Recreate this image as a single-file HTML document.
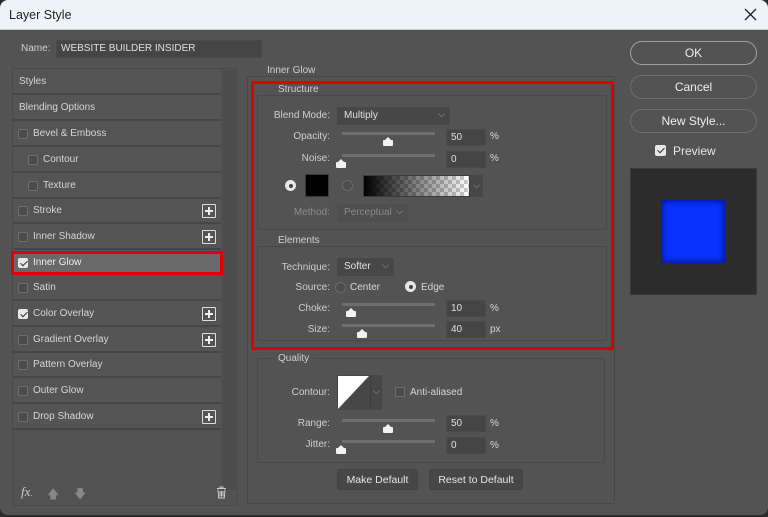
<!DOCTYPE html>
<html><head><meta charset="utf-8"><style>
*{box-sizing:border-box;margin:0;padding:0}
body{width:768px;height:517px;background:#2b2b2b;font-family:"Liberation Sans",sans-serif;font-size:10px;color:#d6d6d6;position:relative;overflow:hidden}
.a{position:absolute}
#win{left:0;top:0;width:768px;height:515px;background:#535353;border-radius:8px;overflow:hidden}
#title{left:0;top:0;width:768px;height:30px;background:#eef3f8;color:#222;font-size:12.5px;padding:8px 0 0 9px;border-bottom:1px solid #ccc}
.lbl{color:#cfcfcf;text-align:right}
.inp{background:#454545;border:1px solid #4a4a4a;color:#e0e0e0;padding:2px 4px}
.item{position:absolute;left:13px;width:208px;height:25px;border-bottom:2px solid #464646;background:#545454}
.item span{position:absolute;top:6px}
.cb{position:absolute;width:10px;height:10px;border:1px solid #6e6e6e;border-radius:2px;background:#4a4a4a}
.cbon{background:#e8e8e8;border-color:#e8e8e8}
.cbon:after{content:"";position:absolute;left:2.5px;top:0px;width:3px;height:6px;border:solid #333;border-width:0 1.5px 1.5px 0;transform:rotate(45deg)}
.plus{position:absolute;left:189px;top:5px;width:14px;height:14px;border:1px solid #ddd;border-radius:1px}
.plus:before{content:"";position:absolute;left:2px;top:5px;width:8px;height:2px;background:#eee}
.plus:after{content:"";position:absolute;left:5px;top:2px;width:2px;height:8px;background:#eee}
.grp{position:absolute;border:1px solid #484848;border-radius:2px}
.leg{position:absolute;background:#535353;padding:0 5px;color:#d0d0d0}
.track{position:absolute;height:3px;background:#6e6e6e}
.thumb{position:absolute;width:10px;height:9px}
.thumb:before{content:"";position:absolute;left:0;top:3px;width:10px;height:6px;background:#f2f2f2;border-radius:1px}
.thumb:after{content:"";position:absolute;left:1px;top:0;border-left:4px solid transparent;border-right:4px solid transparent;border-bottom:4px solid #f2f2f2}
.sel{position:absolute;background:#474747;border-radius:2px;color:#e0e0e0;padding:3px 7px}
.sel i{position:absolute;right:5px;top:2px;font-style:normal;color:#aaa;font-size:9px}
.rb{position:absolute;width:11px;height:11px;border-radius:50%;border:1px solid #6a6a6a;background:#4c4c4c}
.rbon{background:#e6e6e6;border-color:#e6e6e6}
.rbon:after{content:"";position:absolute;left:2.5px;top:2.5px;width:4px;height:4px;border-radius:50%;background:#444}
.btn{position:absolute;border:1px solid #8a8a8a;border-radius:12px;color:#eee;text-align:center;font-size:12px;line-height:22px}
.btn2{position:absolute;background:#474747;border:1px solid #424242;border-radius:2px;color:#e6e6e6;text-align:center;line-height:20px;font-size:10.5px}
</style></head><body>
<div id="win" class="a">
<div id="title" class="a">Layer Style</div>
<svg class="a" style="left:744px;top:8px" width="13" height="13"><path d="M1 1L12 12M12 1L1 12" stroke="#222" stroke-width="1.3"/></svg>
<div class="a lbl" style="left:21px;top:43px">Name:</div>
<div class="a inp" style="left:56px;top:40px;width:206px;height:18px">WEBSITE BUILDER INSIDER</div>

<div class="a" style="left:12px;top:68px;width:226px;height:438px;border:1px solid #4a4a4a;background:#525252"></div>
<div class="a" style="left:222px;top:70px;width:14px;height:420px;background:#4c4c4c"></div>
<div class="item" style="top:70px"><span style="left:6px">Styles</span></div>
<div class="item" style="top:96px"><span style="left:6px">Blending Options</span></div>
<div class="item" style="top:122px"><div class="cb" style="left:5px;top:7px"></div><span style="left:20px">Bevel &amp; Emboss</span></div>
<div class="item" style="top:148px"><div class="cb" style="left:15px;top:7px"></div><span style="left:30px">Contour</span></div>
<div class="item" style="top:174px"><div class="cb" style="left:15px;top:7px"></div><span style="left:30px">Texture</span></div>
<div class="item" style="top:199px"><div class="cb" style="left:5px;top:7px"></div><span style="left:20px">Stroke</span><div class="plus"></div></div>
<div class="item" style="top:225px"><div class="cb" style="left:5px;top:7px"></div><span style="left:20px">Inner Shadow</span><div class="plus"></div></div>
<div class="item" style="top:251px;background:#696969;border:3px solid #e00000;left:11px;width:212px;height:24px"><div class="cb cbon" style="left:4px;top:4px"></div><span style="left:19px;top:3px;color:#eee">Inner Glow</span></div>
<div class="item" style="top:276px"><div class="cb" style="left:5px;top:7px"></div><span style="left:20px">Satin</span></div>
<div class="item" style="top:302px"><div class="cb cbon" style="left:5px;top:7px"></div><span style="left:20px">Color Overlay</span><div class="plus"></div></div>
<div class="item" style="top:328px"><div class="cb" style="left:5px;top:7px"></div><span style="left:20px">Gradient Overlay</span><div class="plus"></div></div>
<div class="item" style="top:353px"><div class="cb" style="left:5px;top:7px"></div><span style="left:20px">Pattern Overlay</span></div>
<div class="item" style="top:379px"><div class="cb" style="left:5px;top:7px"></div><span style="left:20px">Outer Glow</span></div>
<div class="item" style="top:405px"><div class="cb" style="left:5px;top:7px"></div><span style="left:20px">Drop Shadow</span><div class="plus"></div></div>
<div class="a" style="left:21px;top:484px;font-style:italic;font-size:13px;color:#ccc;font-family:'Liberation Serif',serif">fx<span style="font-size:8px">.</span></div>
<div class="a" style="left:47px;top:485px;color:#888;font-size:12px">🡅</div>
<div class="a" style="left:74px;top:485px;color:#888;font-size:12px">🡇</div>
<svg class="a" style="left:216px;top:486px" width="11" height="13"><path d="M1 2.5h9M4 2.5V1h3v1.5M2 3.5l.7 8.5h5.6l.7-8.5M4 5v5.5M5.5 5v5.5M7 5v5.5" stroke="#ccc" fill="none" stroke-width="1"/></svg>

<div class="grp" style="left:247px;top:76px;width:368px;height:428px;border-color:#474747"></div>
<div class="leg" style="left:262px;top:65px">Inner Glow</div>
<div class="a" style="left:251px;top:81px;width:363px;height:269px;border:3px solid #e00000;border-radius:2px"></div>

<div class="grp" style="left:257px;top:95px;width:350px;height:135px"></div>
<div class="leg" style="left:273px;top:84px">Structure</div>
<div class="a lbl" style="left:260px;top:110px;width:70px">Blend Mode:</div>
<div class="sel" style="left:337px;top:107px;width:113px;height:18px">Multiply<i>⌵</i></div>
<div class="a lbl" style="left:260px;top:131px;width:70px">Opacity:</div>
<div class="track" style="left:342px;top:132px;width:93px"></div><div class="thumb" style="left:383px;top:137px"></div>
<div class="a inp" style="left:446px;top:129px;width:40px;height:17px">50</div><div class="a" style="left:490px;top:131px">%</div>
<div class="a lbl" style="left:260px;top:153px;width:70px">Noise:</div>
<div class="track" style="left:342px;top:154px;width:93px"></div><div class="thumb" style="left:336px;top:159px"></div>
<div class="a inp" style="left:446px;top:151px;width:40px;height:17px">0</div><div class="a" style="left:490px;top:153px">%</div>
<div class="rb rbon" style="left:285px;top:180px"></div>
<div class="a" style="left:305px;top:174px;width:24px;height:23px;background:#000;border:1px solid #3a3a3a"></div>
<div class="rb" style="left:342px;top:180px"></div>
<div class="a" style="left:363px;top:175px;width:107px;height:22px;border:1px solid #3a3a3a;background:linear-gradient(90deg,#000,rgba(0,0,0,0)),repeating-conic-gradient(#fff 0 25%,#ccc 0 50%) 0 0/8px 8px"></div>
<div class="a" style="left:470px;top:175px;width:13px;height:22px;background:#474747;color:#aaa;font-size:9px;text-align:center;line-height:20px">⌵</div>
<div class="a lbl" style="left:260px;top:207px;width:70px;color:#8c8c8c">Method:</div>
<div class="sel" style="left:337px;top:204px;width:71px;height:18px;color:#8a8a8a;background:#4e4e4e">Perceptual<i>⌵</i></div>

<div class="grp" style="left:257px;top:246px;width:350px;height:95px"></div>
<div class="leg" style="left:273px;top:235px">Elements</div>
<div class="a lbl" style="left:260px;top:262px;width:70px">Technique:</div>
<div class="sel" style="left:337px;top:258px;width:57px;height:18px">Softer<i>⌵</i></div>
<div class="a lbl" style="left:260px;top:282px;width:70px">Source:</div>
<div class="rb" style="left:335px;top:282px"></div><div class="a" style="left:350px;top:282px">Center</div>
<div class="rb rbon" style="left:405px;top:281px"></div><div class="a" style="left:421px;top:282px">Edge</div>
<div class="a lbl" style="left:260px;top:303px;width:70px">Choke:</div>
<div class="track" style="left:342px;top:303px;width:93px"></div><div class="thumb" style="left:346px;top:308px"></div>
<div class="a inp" style="left:446px;top:300px;width:40px;height:17px">10</div><div class="a" style="left:490px;top:303px">%</div>
<div class="a lbl" style="left:260px;top:324px;width:70px">Size:</div>
<div class="track" style="left:342px;top:324px;width:93px"></div><div class="thumb" style="left:357px;top:329px"></div>
<div class="a inp" style="left:446px;top:321px;width:40px;height:17px">40</div><div class="a" style="left:490px;top:324px">px</div>

<div class="grp" style="left:257px;top:358px;width:348px;height:105px"></div>
<div class="leg" style="left:273px;top:353px">Quality</div>
<div class="a lbl" style="left:260px;top:387px;width:70px">Contour:</div>
<svg class="a" style="left:337px;top:375px" width="33" height="35"><rect width="33" height="35" fill="#474747"/><path d="M1 34L32 1H1Z" fill="#fff"/></svg>
<div class="a" style="left:370px;top:375px;width:12px;height:35px;background:#474747;border-left:1px solid #3c3c3c;color:#aaa;font-size:9px;text-align:center;line-height:33px">⌵</div>
<div class="cb" style="left:395px;top:387px"></div><div class="a" style="left:410px;top:387px">Anti-aliased</div>
<div class="a lbl" style="left:260px;top:418px;width:70px">Range:</div>
<div class="track" style="left:342px;top:419px;width:93px"></div><div class="thumb" style="left:383px;top:424px"></div>
<div class="a inp" style="left:446px;top:415px;width:40px;height:17px">50</div><div class="a" style="left:490px;top:418px">%</div>
<div class="a lbl" style="left:260px;top:439px;width:70px">Jitter:</div>
<div class="track" style="left:342px;top:440px;width:93px"></div><div class="thumb" style="left:336px;top:445px"></div>
<div class="a inp" style="left:446px;top:437px;width:40px;height:17px">0</div><div class="a" style="left:490px;top:440px">%</div>
<div class="btn2" style="left:337px;top:469px;width:81px;height:21px">Make Default</div>
<div class="btn2" style="left:429px;top:469px;width:94px;height:21px">Reset to Default</div>

<div class="btn" style="left:630px;top:41px;width:127px;height:24px;border-color:#a0a0a0">OK</div>
<div class="btn" style="left:630px;top:75px;width:127px;height:24px;border-color:#6e6e6e">Cancel</div>
<div class="btn" style="left:630px;top:109px;width:127px;height:24px;border-color:#6e6e6e">New Style...</div>
<div class="cb cbon" style="left:655px;top:145px;width:11px;height:11px"></div>
<div class="a" style="left:673px;top:144px;font-size:12px;color:#e6e6e6">Preview</div>
<div class="a" style="left:630px;top:168px;width:127px;height:127px;background:#2c2c2c;border:1px solid #3a3a3a"></div>
<div class="a" style="left:661px;top:200px;width:64px;height:63px;background:#0a32ff;box-shadow:inset 0 0 6px 2px #001a9a"></div>
</div>
</body></html>
